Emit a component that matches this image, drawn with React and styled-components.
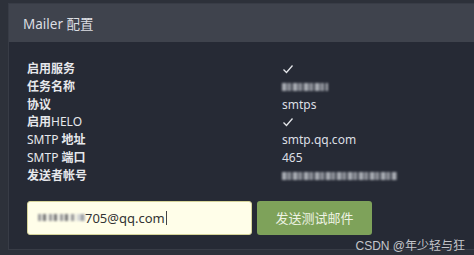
import React from "react";
import styled, { createGlobalStyle } from "styled-components";

const Global = createGlobalStyle`
  html, body {
    margin: 0;
    padding: 0;
    background: #2d313a;
    font-family: "Noto Sans", "Noto Sans CJK SC", sans-serif;
  }
`;

const Page = styled.div`
  width: 474px;
  height: 255px;
  padding: 3px 0 0 8px;
  box-sizing: border-box;
  overflow: hidden;
  position: relative;
`;

const Panel = styled.div`
  background: #262a35;
  border: 1px solid #383c46;
  border-right: none;
  height: 247px;
  box-sizing: border-box;
`;

const PanelHeader = styled.div`
  height: 38px;
  background: #3f434d;
  display: flex;
  align-items: center;
  padding-left: 14px;
  color: #dcdee3;
  font-size: 13.5px;
`;

const PanelBody = styled.div`
  padding: 18px 0 0 18px;
`;

const InfoGrid = styled.div`
  display: grid;
  grid-template-columns: 255px 1fr;
  font-size: 12px;
  line-height: 17.8px;
`;

const Label = styled.div`
  font-weight: 700;
  color: #e6e8ec;
`;

const Latin = styled.span`
  font-weight: 400;
`;

const Value = styled.div`
  color: #dcdfe4;
  display: flex;
  align-items: center;
`;

const Blurred = styled.span`
  display: inline-block;
  width: ${(p) => p.$w}px;
  height: 8px;
  background: repeating-linear-gradient(
    90deg,
    #c8cbd1 0 4px,
    #7b7f88 4px 6px,
    #a9acb3 6px 9px,
    #4a4e58 9px 11px
  );
  filter: blur(1px);
  opacity: 0.8;
`;

const Check = () => (
  <svg width="12" height="12" viewBox="0 0 12 12" fill="none">
    <path d="M1.5 6.5 L4.5 9.5 L10.5 2.5" stroke="#e4e6ea" strokeWidth="1.3" />
  </svg>
);

const FormRow = styled.div`
  display: flex;
  gap: 5px;
  margin-top: 16px;
`;

const EmailInput = styled.div`
  width: 225px;
  height: 34px;
  box-sizing: border-box;
  background: #fffee9;
  border: 1px solid #d6d49a;
  border-radius: 3px;
  display: flex;
  align-items: center;
  padding-left: 10px;
  font-size: 13px;
  color: #333;
`;

const MaskedLead = styled.span`
  display: inline-block;
  width: 38px;
  height: 7px;
  margin-right: 1px;
  background: repeating-linear-gradient(
    90deg,
    #9a9a9a 0 3px,
    #e8e8e0 3px 5px,
    #777 5px 8px,
    #f4f4ea 8px 11px
  );
  filter: blur(0.8px);
`;

const Caret = styled.span`
  display: inline-block;
  width: 1px;
  height: 14px;
  background: #444;
  margin-left: 1px;
`;

const SendButton = styled.button`
  width: 115px;
  height: 34px;
  border: none;
  border-radius: 3px;
  background: #7ea25a;
  color: #eef3e4;
  font-size: 13px;
  font-family: "Noto Sans CJK SC", sans-serif;
  padding: 0;
`;

const Watermark = styled.div`
  position: absolute;
  right: 9px;
  bottom: 2px;
  font-size: 12px;
  color: #c4c6cb;
  font-family: "Liberation Sans", "Noto Sans CJK SC", sans-serif;
`;

const rows = [
  ["启用服务", <Check />],
  ["任务名称", <Blurred $w={46} />],
  ["协议", "smtps"],
  [<>启用<Latin>HELO</Latin></>, <Check />],
  [<><Latin>SMTP </Latin>地址</>, "smtp.qq.com"],
  [<><Latin>SMTP </Latin>端口</>, "465"],
  ["发送者帐号", <Blurred $w={115} />],
];

export default function App() {
  return (
    <>
      <Global />
      <Page>
        <Panel>
          <PanelHeader>Mailer 配置</PanelHeader>
          <PanelBody>
            <InfoGrid>
              {rows.map(([label, value], i) => (
                <React.Fragment key={i}>
                  <Label>{label}</Label>
                  <Value>{value}</Value>
                </React.Fragment>
              ))}
            </InfoGrid>
            <FormRow>
              <EmailInput>
                <MaskedLead />
                <Blurred $w={8} style={{ height: 7 }} />
                705@qq.com
                <Caret />
              </EmailInput>
              <SendButton>发送测试邮件</SendButton>
            </FormRow>
          </PanelBody>
        </Panel>
        <Watermark>CSDN @年少轻与狂</Watermark>
      </Page>
    </>
  );
}
